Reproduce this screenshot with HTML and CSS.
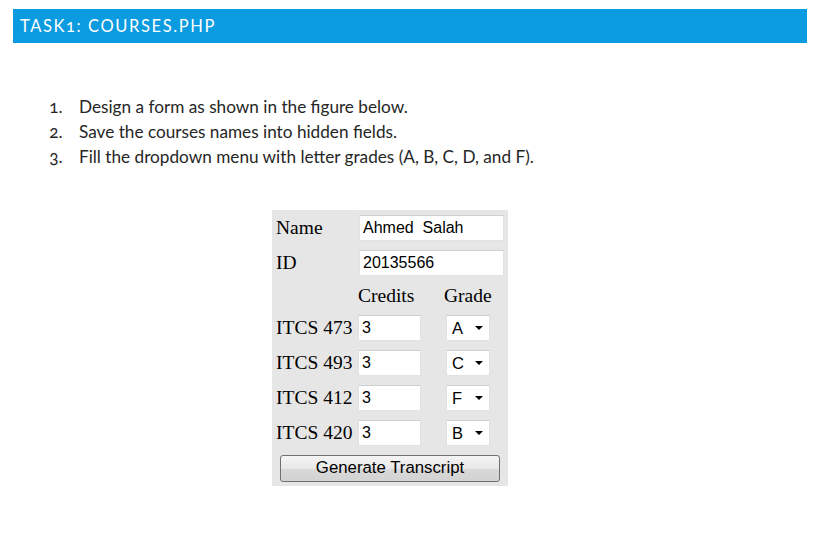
FILE: index.html
```html
<!DOCTYPE html>
<html>
<head>
  <title>Task1: courses.php</title>
  <link rel="stylesheet" href="styles.css">
</head>
<body>
  <div class="page">
    <h1 class="task-bar">Task1: courses.php</h1>

    <ol class="steps">
      <li>Design a form as shown in the figure below.</li>
      <li>Save the courses names into hidden fields.</li>
      <li>Fill the dropdown menu with letter grades (A, B, C, D, and F).</li>
    </ol>

    <form class="transcript" action="courses.php" method="POST">
      <input type="hidden" name="course1" value="ITCS 473">
      <input type="hidden" name="course2" value="ITCS 493">
      <input type="hidden" name="course3" value="ITCS 412">
      <input type="hidden" name="course4" value="ITCS 420">

      <label for="name">Name</label>
      <input class="wide" type="text" id="name" name="name" value="Ahmed  Salah">

      <label for="sid">ID</label>
      <input class="wide" type="text" id="sid" name="id" value="20135566">

      <span></span>
      <span class="col-head">Credits</span>
      <span class="col-head">Grade</span>

      <label for="cr1">ITCS 473</label>
      <input class="credits" type="text" id="cr1" name="credits1" value="3">
      <div class="grade">
        <select name="grade1">
          <option selected>A</option><option>B</option><option>C</option><option>D</option><option>F</option>
        </select>
      </div>

      <label for="cr2">ITCS 493</label>
      <input class="credits" type="text" id="cr2" name="credits2" value="3">
      <div class="grade">
        <select name="grade2">
          <option>A</option><option>B</option><option selected>C</option><option>D</option><option>F</option>
        </select>
      </div>

      <label for="cr3">ITCS 412</label>
      <input class="credits" type="text" id="cr3" name="credits3" value="3">
      <div class="grade">
        <select name="grade3">
          <option>A</option><option>B</option><option>C</option><option>D</option><option selected>F</option>
        </select>
      </div>

      <label for="cr4">ITCS 420</label>
      <input class="credits" type="text" id="cr4" name="credits4" value="3">
      <div class="grade">
        <select name="grade4">
          <option>A</option><option selected>B</option><option>C</option><option>D</option><option>F</option>
        </select>
      </div>

      <button type="submit">Generate Transcript</button>
    </form>
  </div>
</body>
</html>
```

FILE: styles.css
```css
body {
  margin: 0;
  font-family: Lato, "Open Sans", sans-serif;
  color: #222;
  background: #fff;
}

.page {
  padding: 9px 6px 0 13px;
}

.task-bar {
  margin: 0;
  height: 34px;
  padding-left: 7px;
  background-color: #0a9be0;
  color: #fff;
  font-size: 16.5px;
  font-weight: normal;
  text-transform: uppercase;
  letter-spacing: 1.6px;
  line-height: 34px;
  font-variant-numeric: oldstyle-nums;
}

.steps {
  margin: 51px 0 0 0;
  padding-left: 54px;
  font-size: 17.2px;
  line-height: 25px;
  color: #262626;
}

.steps li {
  padding-left: 12px;
}

.steps li::marker {
  font-variant-numeric: oldstyle-nums;
}

.transcript {
  display: grid;
  grid-template-columns: 82px 86px 58px;
  grid-template-rows: 26px 26px 21px 26px 26px 26px 26px 27px;
  row-gap: 9px;
  align-items: center;
  width: 228px;
  margin: 41px 0 0 259px;
  padding: 5px 4px 4px 4px;
  background-color: #e6e6e6;
  font-family: "Liberation Serif", "Times New Roman", serif;
  font-size: 19.5px;
  color: #000;
}

.transcript label,
.col-head {
  white-space: nowrap;
}

.transcript .col-head {
  align-self: end;
  line-height: 21px;
}

.transcript input[type="text"] {
  height: 26px;
  box-sizing: border-box;
  padding: 1px 3px;
  border: 1px solid #e2e2e2;
  border-top-color: #cfcfcf;
  background: #fff;
  font-family: "Liberation Sans", Arial, sans-serif;
  font-size: 16px;
  color: #000;
}

.transcript .wide {
  grid-column: 2 / 4;
  width: 145px;
  margin-left: 1px;
}

.transcript .credits {
  width: 63px;
}

.grade {
  position: relative;
  width: 44px;
  height: 26px;
  margin-left: 2px;
}

.grade select {
  appearance: none;
  -webkit-appearance: none;
  width: 44px;
  height: 26px;
  padding: 0 0 0 5px;
  border: 1px solid #e2e2e2;
  border-top-color: #cfcfcf;
  border-radius: 0;
  background: #fff;
  font-family: "Liberation Sans", Arial, sans-serif;
  font-size: 16.5px;
  color: #000;
}

.grade::after {
  content: "";
  position: absolute;
  right: 7px;
  top: 11px;
  border-left: 4px solid transparent;
  border-right: 4px solid transparent;
  border-top: 4px solid #000;
  pointer-events: none;
}

.transcript button {
  grid-column: 1 / 4;
  justify-self: start;
  width: 220px;
  height: 27px;
  margin: -1px 0 0 4px;
  border: 1px solid #707070;
  border-radius: 3px;
  background: linear-gradient(#f4f4f4, #e8e8e8 50%, #d9d9d9 51%, #d2d2d2);
  font-family: "Liberation Sans", Arial, sans-serif;
  font-size: 16.8px;
  color: #000;
}
```
